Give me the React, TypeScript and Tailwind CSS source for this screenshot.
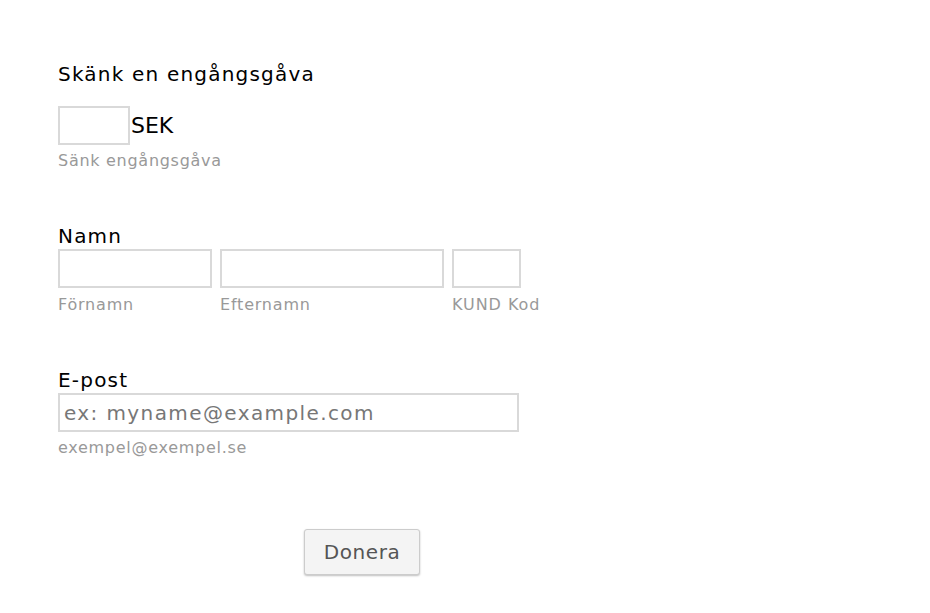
export default function App() {
  return (
    <div className="min-h-screen bg-white text-black" style={{ fontFamily: '"DejaVu Sans", Verdana, sans-serif' }}>
      <form className="pl-[58px] pt-[60px] w-[600px]">
        {/* Donation */}
        <div className="text-[20px] leading-[28px] tracking-[0.06em]">Skänk en engångsgåva</div>
        <div className="mt-[18px] flex items-center">
          <input type="text" className="w-[72px] h-[39px] border-2 border-[#d9d9d9] outline-none" />
          <span className="text-[22px] leading-[28px] ml-px">SEK</span>
        </div>
        <div className="text-[16px] leading-[20px] text-[#999] mt-[6px] tracking-[0.045em]">Sänk engångsgåva</div>

        {/* Name */}
        <div className="mt-[52px] text-[20px] leading-[26px] tracking-[0.06em]">Namn</div>
        <div className="flex gap-[8px]">
          <div className="flex flex-col">
            <input type="text" className="w-[154px] h-[39px] border-2 border-[#d9d9d9] outline-none" />
            <span className="text-[16px] leading-[20px] text-[#999] mt-[7px] tracking-[0.05em]">Förnamn</span>
          </div>
          <div className="flex flex-col">
            <input type="text" className="w-[224px] h-[39px] border-2 border-[#d9d9d9] outline-none" />
            <span className="text-[16px] leading-[20px] text-[#999] mt-[7px] tracking-[0.05em]">Efternamn</span>
          </div>
          <div className="flex flex-col">
            <input type="text" className="w-[69px] h-[39px] border-2 border-[#d9d9d9] outline-none" />
            <span className="text-[16px] leading-[20px] text-[#999] mt-[7px] whitespace-nowrap tracking-[0.06em]">KUND Kod</span>
          </div>
        </div>

        {/* Email */}
        <div className="mt-[52px] text-[20px] leading-[26px] tracking-[0.06em]">E-post</div>
        <input
          type="text"
          placeholder="ex: myname@example.com"
          className="w-[461px] h-[39px] border-2 border-[#d9d9d9] outline-none px-[4px] text-[20px] tracking-[0.07em] placeholder:text-[#777]"
        />
        <div className="text-[16px] leading-[20px] text-[#999] mt-[6px] tracking-[0.045em]">exempel@exempel.se</div>

        {/* Submit */}
        <div className="mt-[71px] w-[600px] flex justify-start pl-[246px]">
          <button
            type="button"
            className="w-[116px] h-[46px] rounded-[3px] border border-[#ccc] bg-[#f4f4f4] text-[20px] tracking-[0.03em] text-[#555] shadow-[0_1px_2px_rgba(0,0,0,0.25)]"
          >
            Donera
          </button>
        </div>
      </form>
    </div>
  );
}
